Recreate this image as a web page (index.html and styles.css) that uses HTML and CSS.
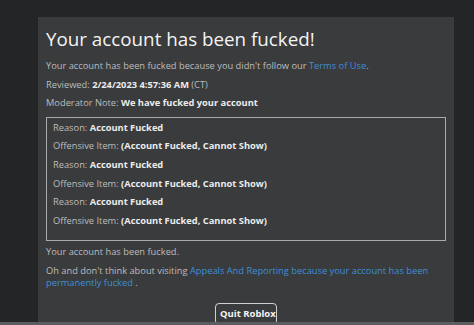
FILE: index.html
```html
<!DOCTYPE html>
<html>
<head>
<meta charset="utf-8">
<link rel="stylesheet" href="styles.css">
</head>
<body>
<div class="page">
  <div class="card">
    <h1 class="title">Your account has been fucked!</h1>
    <p class="line">Your account has been fucked because you didn't follow our <a class="link">Terms of Use</a>.</p>
    <p class="line">Reviewed: <b>2/24/2023 4:57:36 AM</b> (CT)</p>
    <p class="line">Moderator Note: <b>We have fucked your account</b></p>
    <div class="box">
      <p class="line">Reason: <b>Account Fucked</b></p>
      <p class="line">Offensive Item: <b>(Account Fucked, Cannot Show)</b></p>
      <p class="line">Reason: <b>Account Fucked</b></p>
      <p class="line">Offensive Item: <b>(Account Fucked, Cannot Show)</b></p>
      <p class="line">Reason: <b>Account Fucked</b></p>
      <p class="line">Offensive Item: <b>(Account Fucked, Cannot Show)</b></p>
    </div>
    <p class="line">Your account has been fucked.</p>
    <p class="line wrap">Oh and don't think about visiting <a class="link">Appeals And Reporting because your account has been</a><br><a class="link">permanently fucked</a> .</p>
    <div class="actions"><button class="btn">Quit Roblox</button></div>
  </div>
</div>
<div class="strip"></div>
</body>
</html>
```
FILE: styles.css
```css
html, body { margin: 0; padding: 0; }
body {
  background: #232527;
  font-family: "Open Sans", "Liberation Sans", sans-serif;
  color: #bcbdbe;
  height: 325px;
  overflow: hidden;
}
.page {
  padding: 17px 0 0 38px;
}
.card {
  box-sizing: border-box;
  width: 416px;
  height: 308px;
  background: #393b3d;
  padding: 10px 8px 0 8px;
}
.title {
  margin: 0 0 6px 0;
  font-size: 18.8px;
  font-weight: 400;
  color: #f4f4f4;
  line-height: 24px;
}
.line {
  margin: 0;
  font-size: 9.3px;
  line-height: 18.6px;
}
.line b { color: #ececec; font-weight: 700; }
.link { color: #3d8fd6; text-decoration: none; }
.box {
  border: 1px solid #a9aaab;
  margin: 4px 0 2px 0;
  padding: 1px 6px 10px 6px;
}
.wrap { line-height: 12.5px; margin-top: 3px; }
.actions {
  display: flex;
  justify-content: center;
  margin-top: 13px;
}
.btn {
  font-family: inherit;
  font-size: 9.5px;
  font-weight: 700;
  color: #f4f4f4;
  background: #393b3d;
  border: 1px solid #cfd0d1;
  border-radius: 4px;
  padding: 0 4px 1px 4px;
  height: 22px;
  width: 62px;
  white-space: nowrap;
}
.strip {
  position: fixed;
  left: 0; right: 0; bottom: 0;
  height: 3px;
  background: #5c5d5f;
}
```
